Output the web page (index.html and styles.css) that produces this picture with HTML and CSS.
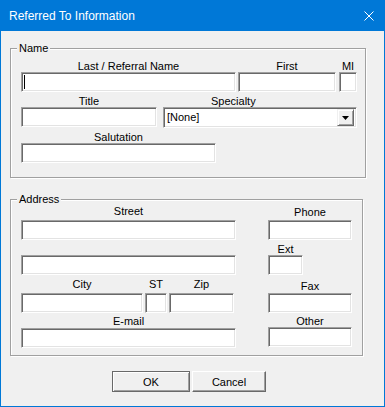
FILE: index.html
```html
<!DOCTYPE html>
<html>
<head>
<meta charset="utf-8">
<link rel="stylesheet" href="styles.css">
</head>
<body>
<div class="window">
  <div class="titlebar">
    <span class="title">Referred To Information</span>
    <svg class="close" width="10" height="10" viewBox="0 0 10 10"><path d="M0.5 0.5 L9.5 9.5 M9.5 0.5 L0.5 9.5" stroke="#fff" stroke-width="1" fill="none"/></svg>
  </div>
  <div class="client">
    <div class="group name-group">
      <span class="legend">Name</span>
      <div class="row r1">
        <div class="col w-last"><div class="lbl">Last / Referral Name</div><div class="edit"><span class="caret"></span></div></div>
        <div class="col w-first"><div class="lbl">First</div><div class="edit"></div></div>
        <div class="col w-mi"><div class="lbl">MI</div><div class="edit"></div></div>
      </div>
      <div class="row r2">
        <div class="col w-title"><div class="lbl">Title</div><div class="edit"></div></div>
        <div class="col w-spec"><div class="lbl lbl-left">Specialty</div>
          <div class="combo"><span class="combo-text">[None]</span><span class="drop"><svg width="7" height="4" viewBox="0 0 7 4"><path d="M0 0 H7 L3.5 4 Z" fill="#000"/></svg></span></div>
        </div>
      </div>
      <div class="row r3">
        <div class="col w-sal"><div class="lbl">Salutation</div><div class="edit"></div></div>
      </div>
    </div>

    <div class="group addr-group">
      <span class="legend">Address</span>
      <div class="addr-cols">
        <div class="addr-left">
          <div class="lbl street-lbl">Street</div>
          <div class="edit street"></div>
          <div class="edit street2"></div>
          <div class="row city-row">
            <div class="col w-city"><div class="lbl">City</div><div class="edit"></div></div>
            <div class="col w-st"><div class="lbl">ST</div><div class="edit"></div></div>
            <div class="col w-zip"><div class="lbl">Zip</div><div class="edit"></div></div>
          </div>
          <div class="lbl email-lbl">E-mail</div>
          <div class="edit email"></div>
        </div>
        <div class="addr-right">
          <div class="lbl phone-lbl">Phone</div>
          <div class="edit phone"></div>
          <div class="lbl ext-lbl w-ext">Ext</div>
          <div class="edit w-ext"></div>
          <div class="lbl fax-lbl">Fax</div>
          <div class="edit fax"></div>
          <div class="lbl other-lbl">Other</div>
          <div class="edit other"></div>
        </div>
      </div>
    </div>

    <div class="buttons">
      <div class="btn btn-default">OK</div>
      <div class="btn">Cancel</div>
    </div>
  </div>
</div>
</body>
</html>
```

FILE: styles.css
```css
html, body {
  margin: 0;
  padding: 0;
  background: #f0f0f0;
}
.window {
  width: 385px;
  height: 407px;
  box-sizing: border-box;
  border: 1px solid #0078d7;
  border-top: 0;
  background: #f0f0f0;
  font-family: "Liberation Sans", Arial, sans-serif;
  font-size: 11px;
  color: #000;
  overflow: hidden;
}
.titlebar {
  height: 31px;
  background: #0078d7;
  display: flex;
  align-items: center;
  justify-content: space-between;
  padding: 0 10px 0 8px;
}
.title {
  color: #fff;
  font-size: 12px;
  line-height: 16px;
  margin-top: 1px;
}
.close {
  display: block;
  margin-top: 1px;
}
.client {
  padding: 17px 0 0 9px;
}
.group {
  position: relative;
  box-sizing: border-box;
  border: 1px solid #a0a0a0;
  box-shadow: inset 1px 1px 0 #fff, 1px 1px 0 #fff;
}
.legend {
  position: absolute;
  top: -7px;
  left: 6px;
  padding: 0 2px;
  line-height: 12px;
  background: #f0f0f0;
}
.name-group {
  width: 356px;
  height: 130px;
  padding: 11px 0 0 10px;
}
.addr-group {
  width: 353px;
  height: 157px;
  margin-top: 21px;
  padding: 5px 0 0 10px;
}
.row {
  display: flex;
}
.col {
  display: flex;
  flex-direction: column;
}
.lbl {
  height: 12px;
  line-height: 12px;
  text-align: center;
  white-space: nowrap;
}
.lbl-left {
  text-align: left;
  padding-left: 48px;
}
.edit {
  position: relative;
  height: 20px;
  box-sizing: border-box;
  background: #fff;
  border-style: solid;
  border-width: 1px;
  border-color: #a0a0a0 #fff #fff #a0a0a0;
  box-shadow: inset 1px 1px 0 #696969, inset -1px -1px 0 #e3e3e3;
}
.caret {
  position: absolute;
  left: 2px;
  top: 2px;
  width: 1px;
  height: 14px;
  background: #000;
}
.w-last { width: 215px; }
.w-first { width: 98px; margin-left: 2px; }
.w-mi { width: 18px; margin-left: 3px; }
.r2 { margin-top: 3px; }
.w-title { width: 136px; }
.w-spec { width: 194px; margin-left: 6px; }
.r3 { margin-top: 3px; }
.w-sal { width: 195px; }
.combo {
  position: relative;
  height: 21px;
  box-sizing: border-box;
  background: #fff;
  border-style: solid;
  border-width: 1px;
  border-color: #a0a0a0 #fff #fff #a0a0a0;
  box-shadow: inset 1px 1px 0 #696969, inset -1px -1px 0 #e3e3e3;
  display: flex;
  align-items: center;
  justify-content: space-between;
  padding: 0 2px 0 3px;
}
.combo-text {
  line-height: 13px;
}
.drop {
  width: 17px;
  height: 17px;
  box-sizing: border-box;
  background: #f0f0f0;
  border-style: solid;
  border-width: 1px;
  border-color: #f0f0f0 #696969 #696969 #f0f0f0;
  box-shadow: inset 1px 1px 0 #fff, inset -1px -1px 0 #a0a0a0;
  display: flex;
  align-items: center;
  justify-content: center;
}
.drop svg { display: block; }

.addr-cols {
  display: flex;
}
.addr-left {
  width: 215px;
  display: flex;
  flex-direction: column;
}
.addr-right {
  width: 84px;
  margin-left: 32px;
  display: flex;
  flex-direction: column;
}
.street { margin-top: 3px; }
.street2 { margin-top: 15px; }
.city-row { margin-top: 3px; }
.city-row .edit { margin-top: 3px; }
.w-city { width: 122px; }
.w-st { width: 22px; margin-left: 2px; }
.w-zip { width: 65px; margin-left: 2px; }
.email-lbl { margin-top: 2px; }
.email { margin-top: 1px; }
.phone-lbl { margin-top: 1px; }
.phone { margin-top: 2px; }
.ext-lbl { margin-top: 3px; }
.w-ext { width: 35px; }
.fax-lbl { margin-top: 5px; }
.fax { margin-top: 1px; }
.other-lbl { margin-top: 2px; }

.buttons {
  display: flex;
  margin: 15px 0 0 102px;
}
.btn {
  width: 74px;
  height: 21px;
  box-sizing: border-box;
  background: #f0f0f0;
  border-style: solid;
  border-width: 1px;
  border-color: #fff #696969 #696969 #fff;
  box-shadow: inset -1px -1px 0 #a0a0a0;
  display: flex;
  align-items: center;
  justify-content: center;
  margin-right: 2px;
}
.btn-default {
  width: 78px;
  border-color: #696969;
  box-shadow: inset 1px 1px 0 #fff, inset -1px -1px 0 #a0a0a0;
}
```
